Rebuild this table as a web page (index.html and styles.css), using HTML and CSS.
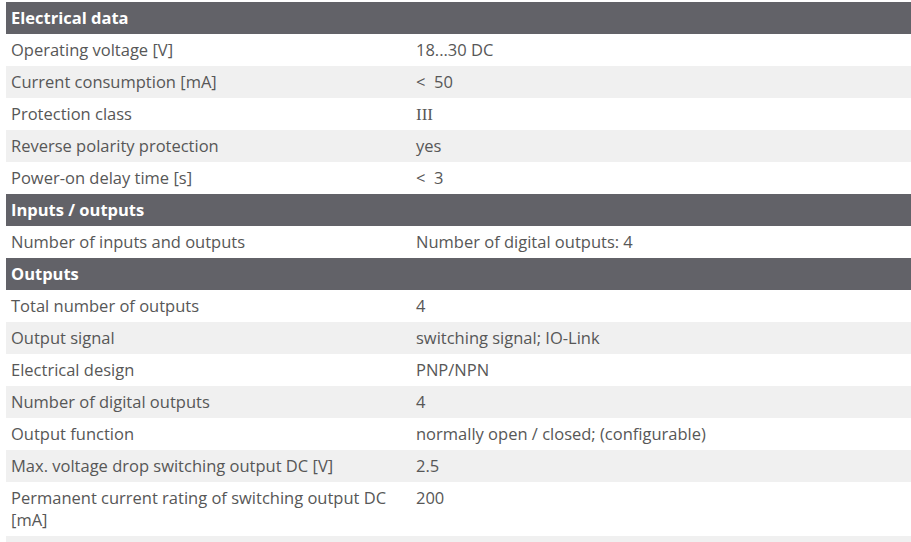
FILE: index.html
```html
<!DOCTYPE html>
<html lang="en">
<head>
<meta charset="utf-8">
<title>Technical data</title>
<link rel="stylesheet" href="styles.css">
</head>
<body>
<table class="spec">
  <colgroup><col class="c-label"><col class="c-value"></colgroup>
  <tbody>
    <tr class="group"><th colspan="2">Electrical data</th></tr>
    <tr><td>Operating voltage [V]</td><td>18...30 DC</td></tr>
    <tr class="alt"><td>Current consumption [mA]</td><td>&lt;&nbsp; 50</td></tr>
    <tr><td>Protection class</td><td><span class="roman">III</span></td></tr>
    <tr class="alt"><td>Reverse polarity protection</td><td>yes</td></tr>
    <tr><td>Power-on delay time [s]</td><td>&lt;&nbsp; 3</td></tr>
    <tr class="group"><th colspan="2">Inputs / outputs</th></tr>
    <tr><td>Number of inputs and outputs</td><td>Number of digital outputs: 4</td></tr>
    <tr class="group"><th colspan="2">Outputs</th></tr>
    <tr><td>Total number of outputs</td><td>4</td></tr>
    <tr class="alt"><td>Output signal</td><td>switching signal; IO-Link</td></tr>
    <tr><td>Electrical design</td><td>PNP/NPN</td></tr>
    <tr class="alt"><td>Number of digital outputs</td><td>4</td></tr>
    <tr><td>Output function</td><td>normally open / closed; (configurable)</td></tr>
    <tr class="alt"><td>Max. voltage drop switching output DC [V]</td><td>2.5</td></tr>
    <tr><td>Permanent current rating of switching output DC [mA]</td><td>200</td></tr>
    <tr class="alt"><td>&nbsp;</td><td>&nbsp;</td></tr>
  </tbody>
</table>
</body>
</html>
```
FILE: styles.css
```css
html, body {
  margin: 0;
  padding: 0;
  background: #ffffff;
}
body {
  padding: 2px 0 0 6px;
  font-family: "Open Sans", "Noto Sans", sans-serif;
  font-size: 16.5px;
  color: #575757;
}
.spec {
  width: 905px;
  border-collapse: collapse;
  table-layout: fixed;
}
.c-label { width: 405px; }
.c-value { width: 500px; }
.spec td, .spec th {
  padding: 5px 5px;
  height: 22px;
  line-height: 22px;
  text-align: left;
  vertical-align: top;
}
.spec .group th {
  background: #626268;
  color: #ffffff;
  font-weight: 700;
}
.spec tr.alt td {
  background: #f0f0f0;
}
.roman {
  font-family: "Liberation Serif", serif;
  font-size: 17px;
  line-height: 1;
}
```
